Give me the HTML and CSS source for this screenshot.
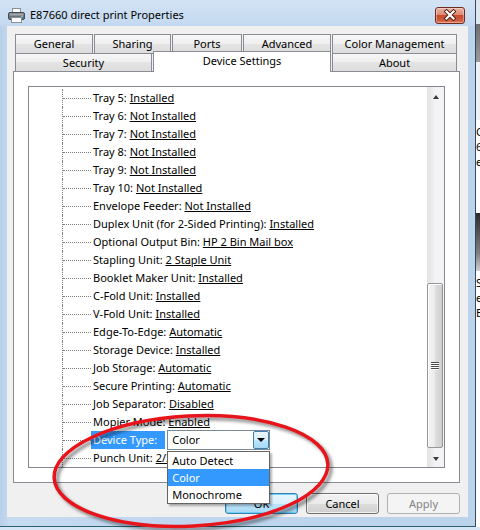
FILE: index.html
```html
<!DOCTYPE html>
<html lang="en">
<head>
<meta charset="utf-8">
<title>E87660 direct print Properties</title>
<link rel="stylesheet" href="styles.css">
</head>
<body>
<div class="screen">
  <div class="window">
    <div class="titlebar">
      <svg class="app-icon" width="17" height="15" viewBox="0 0 17 15">
        <rect x="4.5" y="0.5" width="8" height="5" fill="#fff" stroke="#8a8f96"/>
        <rect x="0.5" y="4.5" width="16" height="7" rx="1.5" fill="#6d7278" stroke="#474c52"/>
        <rect x="1.5" y="5.5" width="14" height="2" fill="#a3a9af"/>
        <rect x="3.5" y="9.5" width="10" height="5" fill="#fff" stroke="#8a8f96"/>
        <rect x="13" y="8" width="2" height="1" fill="#5ec8e0"/>
      </svg>
      <span class="title">E87660 direct print Properties</span>
      <div class="close-btn">
        <svg width="30" height="17" viewBox="0 0 30 17">
          <path class="x-outline" d="M11.5 4.5 L18.5 11.5 M18.5 4.5 L11.5 11.5"/>
          <path class="x-white" d="M11.5 4.5 L18.5 11.5 M18.5 4.5 L11.5 11.5"/>
        </svg>
      </div>
    </div>
    <div class="client">
      <div class="tabs">
        <div class="tabrow">
          <div class="tab w-general">General</div>
          <div class="tab w-sharing">Sharing</div>
          <div class="tab w-ports">Ports</div>
          <div class="tab w-advanced">Advanced</div>
          <div class="tab w-color">Color Management</div>
        </div>
        <div class="tabrow tabrow-front">
          <div class="tab w-security">Security</div>
          <div class="tab tab-selected w-device">Device Settings</div>
          <div class="tab w-about">About</div>
        </div>
      </div>
      <div class="panel">
        <div class="treebox">
          <ul class="tree">
            <li class="node"><span class="label">Tray 5: <u>Installed</u></span></li>
            <li class="node"><span class="label">Tray 6: <u>Not Installed</u></span></li>
            <li class="node"><span class="label">Tray 7: <u>Not Installed</u></span></li>
            <li class="node"><span class="label">Tray 8: <u>Not Installed</u></span></li>
            <li class="node"><span class="label">Tray 9: <u>Not Installed</u></span></li>
            <li class="node"><span class="label">Tray 10: <u>Not Installed</u></span></li>
            <li class="node"><span class="label">Envelope Feeder: <u>Not Installed</u></span></li>
            <li class="node"><span class="label">Duplex Unit (for 2-Sided Printing): <u>Installed</u></span></li>
            <li class="node"><span class="label">Optional Output Bin: <u>HP 2 Bin Mail box</u></span></li>
            <li class="node"><span class="label">Stapling Unit: <u>2 Staple Unit</u></span></li>
            <li class="node"><span class="label">Booklet Maker Unit: <u>Installed</u></span></li>
            <li class="node"><span class="label">C-Fold Unit: <u>Installed</u></span></li>
            <li class="node"><span class="label">V-Fold Unit: <u>Installed</u></span></li>
            <li class="node"><span class="label">Edge-To-Edge: <u>Automatic</u></span></li>
            <li class="node"><span class="label">Storage Device: <u>Installed</u></span></li>
            <li class="node"><span class="label">Job Storage: <u>Automatic</u></span></li>
            <li class="node"><span class="label">Secure Printing: <u>Automatic</u></span></li>
            <li class="node"><span class="label">Job Separator: <u>Disabled</u></span></li>
            <li class="node"><span class="label">Mopier Mode: <u>Enabled</u></span></li>
            <li class="node">
              <span class="label label-selected">Device Type:</span>
              <div class="combo">
                <span class="combo-value">Color</span>
                <span class="combo-arrow"><span class="tri-down-black"></span></span>
                <ul class="dropdown">
                  <li class="dd-item">Auto Detect</li>
                  <li class="dd-item dd-active">Color</li>
                  <li class="dd-item">Monochrome</li>
                </ul>
              </div>
            </li>
            <li class="node"><span class="label">Punch Unit: <u>2/3</u></span></li>
          </ul>
          <div class="vscroll">
            <div class="sb-btn"><span class="tri-up"></span></div>
            <div class="sb-track">
              <div class="sb-thumb">
                <span class="grip"></span><span class="grip"></span><span class="grip"></span><span class="grip"></span>
              </div>
            </div>
            <div class="sb-btn"><span class="tri-down"></span></div>
          </div>
        </div>
      </div>
      <div class="buttons">
        <button class="btn btn-default">OK</button>
        <button class="btn">Cancel</button>
        <button class="btn" disabled>Apply</button>
      </div>
    </div>
  </div>
  <div class="outside">
    <div class="os-light"></div>
    <div class="os-grey"></div>
    <div class="os-pale"></div>
    <div class="os-text">C<br>6<br>e</div>
    <div class="os-gap"></div>
    <div class="os-dark"></div>
    <div class="os-text">S<br>e<br>E</div>
    <div class="os-rest"></div>
  </div>
</div>
<svg class="annotation" width="480" height="530" viewBox="0 0 480 530">
  <defs>
    <filter id="blur" x="-10%" y="-20%" width="130%" height="150%">
      <feGaussianBlur stdDeviation="1.8"/>
    </filter>
  </defs>
  <ellipse cx="194" cy="474" rx="137" ry="55" transform="rotate(-3 194 474)" fill="none" stroke="#000" stroke-opacity="0.4" stroke-width="4" filter="url(#blur)"/>
  <ellipse cx="191" cy="471" rx="137" ry="55" transform="rotate(-3 191 471)" fill="none" stroke="#e8141c" stroke-width="3.5"/>
</svg>
</body>
</html>
```
FILE: styles.css
```css
* { box-sizing: border-box; }
html, body { margin: 0; padding: 0; }
body {
  width: 480px;
  height: 530px;
  overflow: hidden;
  position: relative;
  background: #d6e6f5;
  font-family: "Noto Sans", "Open Sans", sans-serif;
  font-size: 11px;
  color: #000;
}
.screen { display: flex; height: 527px; }

/* window frame */
.window {
  width: 476px;
  height: 527px;
  flex: none;
  display: flex;
  flex-direction: column;
  padding: 0 7px 9px 7px;
  background: linear-gradient(90deg, #b8cfe9 0, #c6daf0 2%, #bfd5ee 50%, #bcd3ec 100%);
  border-right: 1px solid #34495e;
  border-bottom: 1px solid #2a6070;
}
.titlebar {
  height: 26px;
  margin: 0 -7px;
  padding-left: 8px;
  display: flex;
  align-items: flex-start;
  background: linear-gradient(#d2e3f5, #c3d8ef);
}
.app-icon { margin-top: 8px; flex: none; }
.title {
  margin-left: 5px;
  margin-top: 6px;
  line-height: 18px;
  font-size: 11px;
  color: #000;
}
.close-btn {
  margin-left: auto;
  margin-right: 10px;
  margin-top: 7px;
  width: 30px;
  height: 17px;
  border: 1px solid #6e2b20;
  border-radius: 3px;
  background: linear-gradient(#eab3a3 0, #dc8a74 45%, #c84b30 50%, #cf5a3c 80%, #e07a58 100%);
  box-shadow: inset 0 0 0 1px rgba(255, 255, 255, 0.35);
  overflow: hidden;
}
.close-btn svg { display: block; margin: -1px 0 0 -1px; }
.x-outline { stroke: #4a1f16; stroke-width: 4; stroke-linecap: square; fill: none; }
.x-white { stroke: #fff; stroke-width: 2.2; stroke-linecap: square; fill: none; }

/* client */
.client {
  flex: 1;
  background: #f0f0f0;
  padding: 8px 8px 0 6px;
  display: flex;
  flex-direction: column;
}
.tabs { margin: 0 3px 0 2px; }
.tabrow { display: flex; gap: 1px; }
.tab {
  height: 20px;
  border: 1px solid #898c95;
  background: linear-gradient(#f6f6f6 0, #efefef 50%, #e4e4e4 50%, #dddddd 100%);
  text-align: center;
  line-height: 18px;
  white-space: nowrap;
}
.tabrow-front { margin-top: -1px; align-items: flex-start; }
.tabrow-front .tab { height: 18px; border-bottom: none; line-height: 17px; }
.tabrow-front .tab-selected {
  position: relative;
  z-index: 2;
  height: 21px;
  margin-top: -2px;
  margin-bottom: -1px;
  background: #fff;
  line-height: 17px;
}
.w-general { width: 78px; }
.w-sharing { width: 77px; }
.w-ports { width: 70px; }
.w-advanced { width: 88px; }
.w-color { width: 125px; }
.w-security { width: 137px; }
.w-device { width: 178px; }
.w-about { width: 125px; }

.panel {
  height: 412px;
  border: 1px solid #898c95;
  background: #fff;
  padding: 14px;
}
.treebox {
  height: 382px;
  border: 1px solid #828790;
  display: flex;
  background: #fff;
}
.tree {
  list-style: none;
  margin: 0;
  padding: 2px 0 0 0;
  flex: 1;
}
.node {
  height: 18px;
  margin-left: 33px;
  border-left: 1px dotted #7f7f7f;
  display: flex;
  align-items: center;
  line-height: 18px;
  white-space: nowrap;
}
.node::before {
  content: "";
  width: 28px;
  flex: none;
  border-top: 1px dotted #7f7f7f;
}
.label { padding: 0 2px; height: 18px; }
.label u { text-underline-offset: 1px; }
.label-selected { background: #3399ff; color: #fff; padding: 0 8px 0 2px; }

.combo {
  position: relative;
  margin-left: 2px;
  width: 103px;
  height: 20px;
  border: 1px solid #7b8896;
  background: #fff;
  display: flex;
  align-items: center;
}
.combo-value { padding-left: 4px; flex: 1; line-height: 18px; }
.combo-arrow {
  width: 16px;
  height: 18px;
  border: 1px solid #3c7fb1;
  border-radius: 2px;
  background: linear-gradient(#eaf6fd 0, #d9f0fc 50%, #bee6fd 50%, #a7d9f5 100%);
  display: flex;
  align-items: center;
  justify-content: center;
}
.tri-down-black {
  width: 0;
  height: 0;
  border-left: 4px solid transparent;
  border-right: 4px solid transparent;
  border-top: 4px solid #000;
}
.dropdown {
  position: absolute;
  z-index: 10;
  left: -1px;
  top: 20px;
  width: 103px;
  margin: 0;
  padding: 0;
  list-style: none;
  background: #fff;
  border: 1px solid #646464;
  box-shadow: 2px 2px 2px rgba(0, 0, 0, 0.3);
}
.dd-item { height: 17px; line-height: 17px; padding-left: 4px; color: #000; }
.dd-active { background: #3399ff; color: #fff; }

/* scrollbar */
.vscroll {
  width: 17px;
  flex: none;
  display: flex;
  flex-direction: column;
  background: linear-gradient(90deg, #e3e3e3 0, #e9e9e9 25%, #f4f2f4 45%, #f6f3f6 100%);
}
.sb-btn {
  height: 17px;
  display: flex;
  align-items: center;
  justify-content: center;
}
.tri-up {
  width: 0; height: 0;
  border-left: 3.5px solid transparent;
  border-right: 3.5px solid transparent;
  border-bottom: 4px solid #3a3a3a;
  margin-top: 3px;
}
.tri-down {
  width: 0; height: 0;
  border-left: 3.5px solid transparent;
  border-right: 3.5px solid transparent;
  border-top: 4px solid #3a3a3a;
}
.sb-track { flex: 1; padding-top: 179px; }
.sb-thumb {
  width: 16px;
  height: 165px;
  border: 1px solid #979797;
  border-radius: 2px;
  background: linear-gradient(90deg, #f4f4f4 0, #ececec 45%, #dcdcdc 55%, #cfcfcf 100%);
  box-shadow: inset 1px 1px 0 #fff;
  display: flex;
  flex-direction: column;
  align-items: center;
  justify-content: center;
  gap: 1px;
}
.grip { width: 8px; height: 1px; background: #4e4e4e; box-shadow: 0 1px 0 #fff; }

/* buttons */
.buttons {
  margin-top: 10px;
  display: flex;
  justify-content: flex-end;
  gap: 8px;
}
.btn {
  width: 73px;
  height: 21px;
  padding: 0;
  font: inherit;
  line-height: 19px;
  color: #000;
  border: 1px solid #707070;
  border-radius: 3px;
  background: linear-gradient(#f2f2f2 0, #ebebeb 50%, #dddddd 50%, #cfcfcf 100%);
  box-shadow: inset 0 0 0 1px rgba(255, 255, 255, 0.7);
}
.btn-default {
  border-color: #3c7fb1;
  background: linear-gradient(#eaf6fd 0, #d9f0fc 50%, #bee6fd 50%, #a7d9f5 100%);
  box-shadow: inset 0 0 0 1px #6ed0f8;
}
.btn:disabled {
  border-color: #adb2b5;
  background: #f4f4f4;
  color: #838383;
  box-shadow: none;
}

/* outside area */
.outside {
  flex: 1;
  background: #fff;
  display: flex;
  flex-direction: column;
  overflow: hidden;
}
.os-light { height: 24px; background: #dfe7ee; flex: none; }
.os-grey { height: 38px; background: linear-gradient(#6e6e6e, #9a9a9a); flex: none; }
.os-pale { height: 58px; background: #eef1f4; flex: none; }
.os-text { line-height: 15px; font-size: 11px; padding-top: 4px; flex: none; }
.os-gap { height: 44px; flex: none; }
.os-dark { height: 58px; background: linear-gradient(#2a2a2a, #808080 70%, #d0d0d0); flex: none; }
.os-rest { flex: 1; }

.annotation {
  position: absolute;
  left: 0;
  top: 0;
  z-index: 20;
  pointer-events: none;
}
```
